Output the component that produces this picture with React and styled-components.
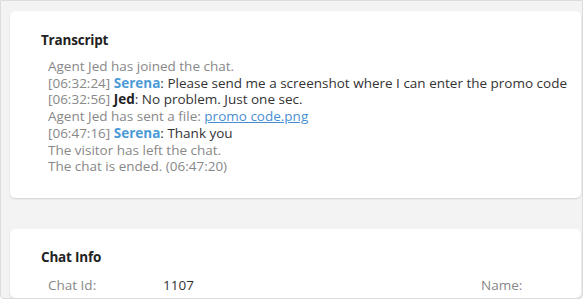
import styled, { createGlobalStyle } from 'styled-components';

const GlobalStyle = createGlobalStyle`
  html, body {
    margin: 0;
    padding: 0;
    background: #ffffff;
  }
  body {
    font-family: "Open Sans", "Liberation Sans", sans-serif;
    font-size: 13.5px;
  }
`;

const transcript = [
    { kind: 'system', text: 'Agent Jed has joined the chat.' },
    { kind: 'msg', time: '06:32:24', from: 'Serena', visitor: true, text: 'Please send me a screenshot where I can enter the promo code' },
    { kind: 'msg', time: '06:32:56', from: 'Jed', text: 'No problem. Just one sec.' },
    { kind: 'file', text: 'Agent Jed has sent a file: ', file: 'promo code.png' },
    { kind: 'msg', time: '06:47:16', from: 'Serena', visitor: true, text: 'Thank you' },
    { kind: 'system', text: 'The visitor has left the chat.' },
    { kind: 'system', text: 'The chat is ended. (06:47:20)' },
];

const App = () => {
    return (
        <>
            <GlobalStyle />
            <Frame>
                <Card>
                    <Title>Transcript</Title>
                    <Lines>
                        {transcript.map((line, i) => {
                            if (line.kind === 'system') return <System key={i}>{line.text}</System>;
                            if (line.kind === 'file') {
                                return (
                                    <System key={i}>
                                        {line.text}
                                        <FileLink href="#">{line.file}</FileLink>
                                    </System>
                                );
                            }
                            return (
                                <Message key={i}>
                                    <Time>[{line.time}] </Time>
                                    <Sender $visitor={line.visitor}>{line.from}</Sender>
                                    {': ' + line.text}
                                </Message>
                            );
                        })}
                    </Lines>
                </Card>
                <InfoCard>
                    <Title>Chat Info</Title>
                    <InfoRow>
                        <Label>Chat Id:</Label>
                        <Value>1107</Value>
                        <Label>Name:</Label>
                    </InfoRow>
                </InfoCard>
            </Frame>
        </>
    );
};

const Frame = styled.div`
  box-sizing: border-box;
  height: 299px;
  overflow: hidden;
  background: #f3f3f3;
  border: 1px solid #dcdcdc;
  border-radius: 0 0 4px 4px;
  padding: 10px 1px 0 9px;
  display: flex;
  flex-direction: column;
  gap: 31px;
`;

const Card = styled.div`
  background: #ffffff;
  border-radius: 5px;
  box-shadow: 0 1px 2px rgba(0, 0, 0, 0.14);
  padding: 21px 20px 23px 31px;
`;

const InfoCard = styled(Card)`
  flex: 1;
  padding-top: 20px;
  padding-bottom: 0;
`;

const Title = styled.h3`
  margin: 0 0 9px;
  font-size: 13.5px;
  line-height: 17px;
  font-weight: 700;
  color: #222222;
  letter-spacing: -0.2px;
`;

const Lines = styled.div`
  padding-left: 7px;
  display: flex;
  flex-direction: column;
`;

const System = styled.div`
  color: #888888;
  line-height: 16.7px;
  white-space: nowrap;
`;

const Message = styled.div`
  color: #333333;
  line-height: 16.7px;
  white-space: nowrap;
`;

const Time = styled.span`
  color: #888888;
`;

const Sender = styled.span`
  font-weight: 700;
  color: ${p => (p.$visitor ? '#4a9ad6' : '#222222')};
`;

const FileLink = styled.a`
  color: #4a8fd4;
  text-decoration: underline;
`;

const InfoRow = styled.div`
  display: grid;
  grid-template-columns: 115px 318px auto;
  padding-left: 7px;
  margin-top: 11px;
  line-height: 17px;
`;

const Label = styled.span`
  color: #888888;
`;

const Value = styled.span`
  color: #333333;
`;

export default App;
